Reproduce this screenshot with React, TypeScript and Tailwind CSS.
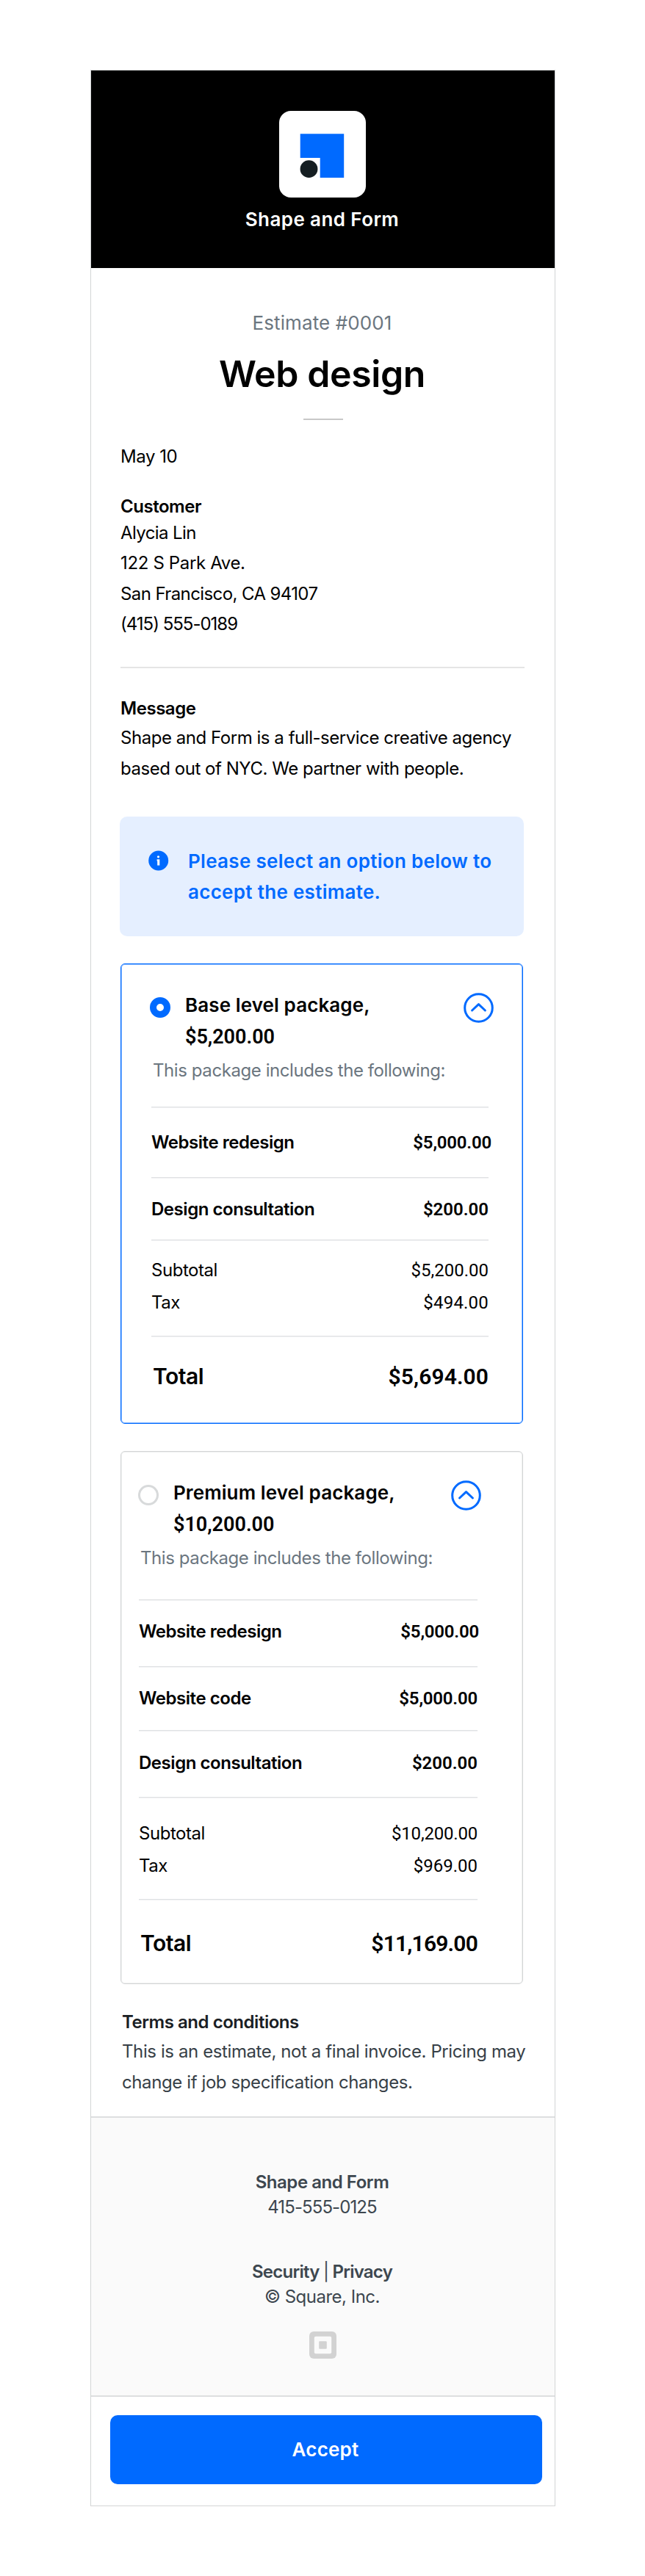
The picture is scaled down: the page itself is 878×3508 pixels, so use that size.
import clsx from 'clsx'

type Item = { name: string; price: string }

type EstimatePackage = {
  name: string
  price: string
  items: Item[]
  subtotal: string
  tax: string
  total: string
}

const basePackage: EstimatePackage = {
  name: 'Base level package,',
  price: '$5,200.00',
  items: [
    { name: 'Website redesign', price: '$5,000.00' },
    { name: 'Design consultation', price: '$200.00' },
  ],
  subtotal: '$5,200.00',
  tax: '$494.00',
  total: '$5,694.00',
}

const premiumPackage: EstimatePackage = {
  name: 'Premium level package,',
  price: '$10,200.00',
  items: [
    { name: 'Website redesign', price: '$5,000.00' },
    { name: 'Website code', price: '$5,000.00' },
    { name: 'Design consultation', price: '$200.00' },
  ],
  subtotal: '$10,200.00',
  tax: '$969.00',
  total: '$11,169.00',
}

function Logo() {
  return (
    <svg width="118" height="118" viewBox="0 0 118 118" className="rounded-2xl bg-white">
      <path d="M28.7 31.3H88.2V91H55.7V64H28.7Z" fill="#006aff" />
      <circle cx="40.5" cy="79.2" r="11.9" fill="#151e22" />
    </svg>
  )
}

function InfoIcon() {
  return (
    <svg width="28" height="28" viewBox="0 0 28 28" className="mt-[6px] shrink-0">
      <circle cx="13.7" cy="14" r="13.5" fill="#006aff" />
      <circle cx="13.5" cy="8.8" r="1.6" fill="#fff" />
      <path d="M11.6 12.2H15.3V20.4H12.2V14.4H11.6Z" fill="#fff" />
    </svg>
  )
}

function SquareLogo() {
  return (
    <svg width="37" height="37" viewBox="0 0 37 37" className="mt-[30px] ml-[2px]">
      <rect width="37" height="37" rx="6" fill="#d2d2d2" />
      <rect x="6.8" y="6.8" width="23.4" height="23.4" rx="2" fill="#fafafa" />
      <rect x="13.2" y="13.2" width="10.6" height="10.6" rx="1.2" fill="#d2d2d2" />
    </svg>
  )
}

function CollapseButton() {
  return (
    <button className="mt-[4px] ml-auto size-[41px]">
      <svg width="41" height="41" viewBox="0 0 41 41" fill="none" stroke="#006aff" strokeWidth="3">
        <circle cx="20.5" cy="20.5" r="18.8" />
        <path d="M11.6 24L20.5 15.6L29.4 24" strokeLinecap="round" strokeLinejoin="round" />
      </svg>
    </button>
  )
}

function Radio({ checked }: { checked?: boolean }) {
  return (
    <div
      className={clsx(
        'mt-[10px] size-7 shrink-0 rounded-full',
        checked ? 'border-9 border-[#006aff]' : 'border-3 border-[#d8dadb]'
      )}
    />
  )
}

function Divider() {
  return <div className="h-[2px] border-t border-[#dfe1e3] bg-[#f1f2f3]" />
}

function Row({ name, price, className, priceClassName = 'tracking-[-0.2px]' }: Item & { className?: string; priceClassName?: string }) {
  return (
    <div className={clsx('flex items-baseline justify-between', className)}>
      <span>{name}</span>
      <span className={clsx("font-['Roboto',sans-serif]", priceClassName)}>{price}</span>
    </div>
  )
}

function PackageHeader({ o, checked }: { o: EstimatePackage; checked?: boolean }) {
  return (
    <div className="flex items-start">
      <Radio checked={checked} />
      <div className="ml-5 text-[26px] leading-[42px] font-semibold tracking-[0.1px]">
        <div>{o.name}</div>
        <div className="mt-[1px] font-['Roboto',sans-serif] text-[27px] leading-[42px] tracking-normal">{o.price}</div>
      </div>
      <CollapseButton />
    </div>
  )
}

function BasePackage() {
  const o = basePackage
  return (
    <section className="ml-[1px] mt-[37px] h-[627px] w-[548px] rounded-md border border-[#006aff] pt-[35px] pl-[39px] shadow-[inset_0_0_0_1px_#80b4ff]">
      <div className="w-[468px]">
        <PackageHeader o={o} checked />
      </div>
      <div className="mt-[9px] mb-[33px] ml-[4px] tracking-[-0.42px] text-[#6b767f]">This package includes the following:</div>
      <div className="ml-[2px] w-[459px]">
        <Divider />
        <Row {...o.items[0]} className="h-[94px] pt-[31px] font-semibold" priceClassName="-mr-[4px] tracking-[-0.2px]" />
        <Divider />
        <Row {...o.items[1]} className="h-[83px] pt-[26px] font-semibold" priceClassName="tracking-normal" />
        <Divider />
        <div className="flex h-[129px] flex-col gap-3 pt-6">
          <Row name="Subtotal" price={o.subtotal} priceClassName="tracking-normal" />
          <Row name="Tax" price={o.tax} priceClassName="tracking-[0.2px]" />
        </div>
        <Divider />
        <Row name="Total" price={o.total} className="pt-[33px] pl-[2px] text-[30px] leading-10 font-semibold" priceClassName="tracking-[0.1px]" />
      </div>
    </section>
  )
}

function PremiumPackage() {
  const o = premiumPackage
  return (
    <section className="ml-[1px] mt-[37px] h-[726px] w-[548px] rounded-md border border-[#d3d5d6] pt-[35px] pl-[23px] shadow-[inset_0_0_0_1px_#eeefef]">
      <div className="w-[467px]">
        <PackageHeader o={o} />
      </div>
      <div className="mt-[9px] mb-[40px] ml-[3px] tracking-[-0.42px] text-[#6b767f]">This package includes the following:</div>
      <div className="ml-[1px] w-[461px]">
        <Divider />
        <Row {...o.items[0]} className="h-[89px] pt-[26px] font-semibold" priceClassName="-mr-[2px] tracking-[-0.2px]" />
        <Divider />
        <Row {...o.items[1]} className="h-[85px] pt-[26px] font-semibold" />
        <Divider />
        <Row {...o.items[2]} className="h-[89px] pt-[27px] font-semibold" priceClassName="tracking-normal" />
        <Divider />
        <div className="flex h-[137px] flex-col gap-3 pt-8">
          <Row name="Subtotal" price={o.subtotal} />
          <Row name="Tax" price={o.tax} priceClassName="tracking-normal" />
        </div>
        <Divider />
        <Row name="Total" price={o.total} className="pt-[38px] pl-[2px] text-[30px] leading-10 font-semibold" priceClassName="tracking-[-0.8px]" />
      </div>
    </section>
  )
}

export default function App() {
  return (
    <div className="h-[3508px] bg-white pt-[95px] pl-[123px] font-['Inter','Liberation_Sans',sans-serif] text-[24px] leading-8 tracking-[-0.46px] text-black">
      <div className="w-[633px] border border-[#d3d5d6]">
        <header className="flex h-[269px] flex-col items-center bg-black pt-[55px] pr-[2px]">
          <Logo />
          <div className="mt-[14px] text-[26px] font-semibold tracking-[0.4px] text-white">Shape and Form</div>
        </header>

        <main className="pt-[59px] pl-[39px]">
          <div className="flex w-[551px] flex-col items-center">
            <div className="text-[26px] tracking-[0.1px] text-[#6b767f]">Estimate #0001</div>
            <h1 className="mt-[23px] text-[50px] leading-[60px] font-semibold tracking-[-0.4px]">Web design</h1>
            <div className="mt-[31px] ml-[2px] h-[2px] w-[54px] bg-[#c8c8c8]" />
          </div>

          <div className="mt-[34px] ml-[1px]">May 10</div>
          <div className="mt-9 ml-[1px] font-semibold">Customer</div>
          <div className="-mt-[1px] ml-[1px] leading-[41.3px] tracking-[-0.6px]">
            <div>Alycia Lin</div>
            <div className="tracking-[-0.35px]">122 S Park Ave.</div>
            <div>San Francisco, CA 94107</div>
            <div className="tracking-[-1px]">(415) 555-0189</div>
          </div>

          <div className="mt-[38px] ml-[1px] h-[2px] w-[550px] bg-[#e5e5e5]" />

          <div className="mt-[39px] ml-[1px] font-semibold">Message</div>
          <p className="mt-[3px] ml-[1px] leading-[42px]">
            Shape and Form is a full-service creative agency
            <br />
            based out of NYC. We partner with people.
          </p>

          <div className="mt-[44px] flex h-[163px] w-[550px] items-start rounded-[10px] bg-[#e5efff] pt-[40px] pl-[39px]">
            <InfoIcon />
            <p className="ml-[26px] text-[26px] leading-[42px] font-semibold tracking-[0.3px] text-[#006aff]">
              Please select an option below to
              <br />
              accept the estimate.
            </p>
          </div>

          <BasePackage />
          <PremiumPackage />

          <div className="mt-9 ml-[3px] font-semibold text-[#1a2024]">Terms and conditions</div>
          <p className="mt-[3px] mb-[25px] ml-[3px] leading-[42px] tracking-[-0.4px] text-[#373f47]">
            This is an estimate, not a final invoice. Pricing may
            <br />
            change if job specification changes.
          </p>
        </main>

        <footer className="flex flex-col items-center border-y-2 border-[#dedfe0] bg-[#fafafa] pt-[71px] pr-[2px] pb-[50px] leading-[34px] text-[#3d474f]">
          <div className="font-semibold">Shape and Form</div>
          <div className="tracking-[-0.9px]">415-555-0125</div>
          <div className="mt-[54px] font-semibold tracking-[-0.75px]">
            Security <span className="font-normal">|</span> Privacy
          </div>
          <div className="tracking-[-0.5px]">© Square, Inc.</div>
          <SquareLogo />
        </footer>

        <div className="pt-[25px] pb-[29px] pl-[26px]">
          <button className="h-[94px] w-[588px] rounded-[10px] bg-[#006aff] pr-[2px] text-[26px] font-semibold tracking-[0.2px] text-white">
            Accept
          </button>
        </div>
      </div>
    </div>
  )
}
